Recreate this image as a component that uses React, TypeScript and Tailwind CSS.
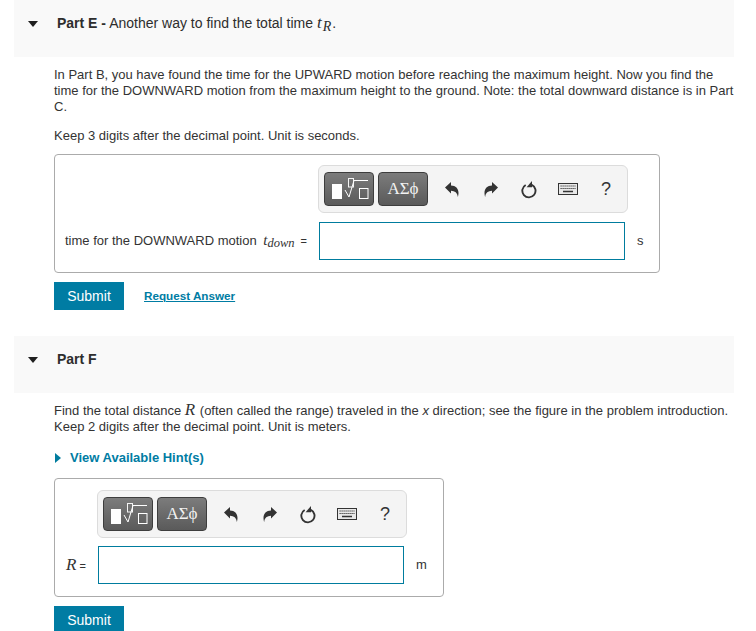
import { ReactNode } from 'react'

const FONT = "font-['Liberation_Sans',Arial,sans-serif]"
const MATH = "font-['Liberation_Serif','Times_New_Roman',serif] italic"

function Caret() {
  return (
    <svg width="10" height="6" viewBox="0 0 10 6" className="shrink-0">
      <path d="M0 0H10L5 6Z" fill="#1f1f1f" />
    </svg>
  )
}

function PartHeader({ children }: { children: ReactNode }) {
  return (
    <div className="flex h-[57px] w-[720px] items-start gap-[19px] bg-[#f9f9f9] pl-[14px] pt-[15px]">
      <div className="pt-[6px]">
        <Caret />
      </div>
      <div className="h-[17px] text-[14px] leading-[17px] text-[#2d2d2d]">{children}</div>
    </div>
  )
}

function DarkButton({ children }: { children: ReactNode }) {
  return (
    <div className="flex h-[34px] w-[50px] items-center justify-center rounded-[4px] border border-[#3d3d3d] bg-gradient-to-b from-[#7c7c7c] to-[#5a5a5a]">
      {children}
    </div>
  )
}

function Toolbar() {
  return (
    <div className="flex h-[48px] w-[310px] items-center rounded-[6px] border border-[#dcdcdc] bg-[#f4f4f4] pl-[5px]">
      <div className="flex gap-[4px]">
        <DarkButton>
          <svg width="42" height="28" viewBox="0 0 42 28" fill="none">
            <rect x="4" y="9" width="10" height="15" fill="#fff" />
            <rect x="20.5" y="3.5" width="5" height="8.5" stroke="#f4f4f4" />
            <path d="M17 15l4 7L26 5.500H40" stroke="#fff" />
            <rect x="31.5" y="13.5" width="8.5" height="10" stroke="#fff" />
          </svg>
        </DarkButton>
        <DarkButton>
          <span className="whitespace-nowrap font-['Liberation_Serif',serif] text-[17px] text-[#f2f2f2]">ΑΣϕ</span>
        </DarkButton>
      </div>
      <div className="ml-[17px] w-[14px]">
        <svg width="14" height="15" viewBox="0 0 14 15">
          <path d="M0 5.500 6 0v3.400c4.600.1 7.500 3 7.500 7.600 0 1-.2 2.500-.7 4-.3-4.200-3-6.200-6.800-6.300V11.500Z" fill="#333" />
        </svg>
      </div>
      <div className="ml-[25px] w-[14px]">
        <svg width="14" height="15" viewBox="0 0 14 15">
          <path d="M14 5.500 8 0v3.400C3.400 3.500.5 6.400.5 11c0 1 .2 2.500.7 4 .3-4.200 3-6.200 6.800-6.300v2.800Z" fill="#333" />
        </svg>
      </div>
      <div className="ml-[22px] w-[18px]">
        <svg width="17" height="19" viewBox="0 0 18 20" fill="none">
          <path d="M6 5.200A7 7 0 1 0 12.500 5" stroke="#333" strokeWidth="2" />
          <path d="M12.700 1v6.500H7" fill="#333" />
        </svg>
      </div>
      <div className="ml-[20px] w-[20px]">
        <svg width="20" height="12" viewBox="0 0 20 12" fill="none">
          <rect x="0.5" y="0.5" width="19" height="11" fill="#e8e8e8" stroke="#333" />
          <path d="M2.500 3h15M2.500 5.500h15" stroke="#333" strokeWidth="1.200" strokeDasharray="1.200 0.800" />
          <path d="M5 8.500h10" stroke="#333" strokeWidth="1.500" />
        </svg>
      </div>
      <span className="ml-[23px] font-['Liberation_Sans',sans-serif] text-[18px] leading-none text-[#333]">?</span>
    </div>
  )
}

function AnswerInput() {
  return <div className="h-[38px] w-[306px] border border-[#007c9e] bg-white" />
}

function SubmitButton() {
  return (
    <div className="flex h-[28px] w-[70px] items-center justify-center bg-[#007ca3] text-[14px] font-medium text-white">
      Submit
    </div>
  )
}

function ArrowIcon() {
  return (
    <svg width="6" height="10" viewBox="0 0 6 10">
      <path d="M0 0 6 5 0 10Z" fill="#007c9e" />
    </svg>
  )
}

export default function App() {
  return (
    <div className={`h-[631px] w-[756px] overflow-hidden bg-white pl-[14px] ${FONT}`}>
      <PartHeader>
        <div className="-mt-[1px] flex items-baseline whitespace-pre">
          <b>Part E -</b> Another way to find the total time{' '}
          <span className={`${MATH} text-[17px] leading-none`}>
            t<span className="relative top-[3px] ml-[1px] text-[14px]">R</span>
          </span>
          <span className="ml-[1px]">.</span>
        </div>
      </PartHeader>

      <div className="ml-[40px] w-[680px]">
        <p className="mt-[10px] w-[682px] text-[13px] leading-[16px] text-[#333]">
          In Part B, you have found the time for the UPWARD motion before reaching the maximum height. Now you find the
          <br />
          time for the DOWNWARD motion from the maximum height to the ground. Note: the total downward distance is in Part
          <br />
          C.
        </p>
        <p className="mt-[13px] text-[13px] leading-[16px] text-[#333]">
          Keep 3 digits after the decimal point. Unit is seconds.
        </p>

        <div className="mt-[10px] h-[119px] w-[606px] rounded-[4px] border border-[#ababab] pl-[10px] pt-[10px]">
          <div className="flex justify-end pr-[31px]">
            <Toolbar />
          </div>
          <div className="mt-[9px] flex items-center">
            <span className="w-[254px] whitespace-nowrap text-[13px] text-[#333]">
              time for the DOWNWARD motion{' '}
              <span className={`${MATH} ml-[3px] text-[15px] leading-none`}>
                t<span className="relative top-[2px] text-[12.5px]">down</span>
              </span>
              <span className="ml-[6px] text-[11px]">=</span>
            </span>
            <AnswerInput />
            <span className="ml-[12px] text-[13px] text-[#333]">s</span>
          </div>
        </div>

        <div className="mt-[9px] flex items-center gap-[20px]">
          <SubmitButton />
          <span className="text-[11.700px] font-bold text-[#007ca3] underline">Request Answer</span>
        </div>
      </div>

      <div className="mt-[26px]">
        <PartHeader>
          <b>Part F</b>
        </PartHeader>
      </div>

      <div className="ml-[40px] w-[680px]">
        <p className="mt-[8px] w-[682px] text-[13px] leading-[16px] text-[#333]">
          Find the total distance <span className={`${MATH} mr-[1px] text-[17px] leading-none`}>R</span> (often called
          the range) traveled in the <i>x</i> direction; see the figure in the problem introduction.
          <br />
          Keep 2 digits after the decimal point. Unit is meters.
        </p>

        <div className="mt-[15px] flex items-center gap-[9px] pl-[1px] text-[13px] font-bold leading-[16px] text-[#007ca3]">
          <ArrowIcon />
          View Available Hint(s)
        </div>

        <div className="mt-[12px] h-[119px] w-[390px] rounded-[4px] border border-[#ababab] pt-[11px]">
          <div className="pl-[42px]">
            <Toolbar />
          </div>
          <div className="mt-[8px] flex items-center">
            <span className="w-[43px] whitespace-nowrap pl-[11px] text-[#333]">
              <span className={`${MATH} text-[17px] leading-none`}>R</span>
              <span className="ml-[3px] text-[11px]">=</span>
            </span>
            <AnswerInput />
            <span className="ml-[12px] text-[13px] text-[#333]">m</span>
          </div>
        </div>

        <div className="mt-[9px]">
          <SubmitButton />
        </div>
      </div>
    </div>
  )
}
